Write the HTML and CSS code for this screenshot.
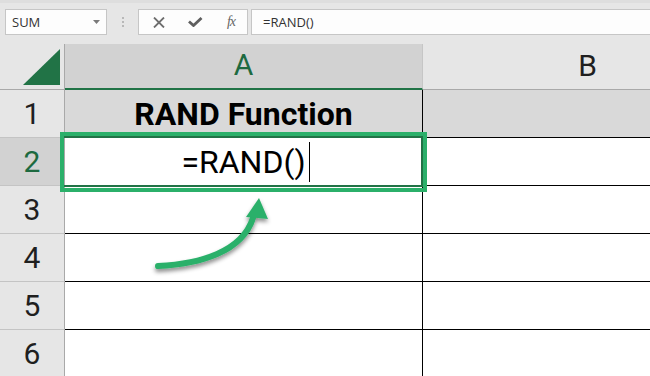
FILE: index.html
```html
<!DOCTYPE html>
<html lang="en">
<head>
  <meta charset="UTF-8">
  <meta name="viewport" content="width=device-width, initial-scale=1.0">
  <title>RAND Function</title>
  <link rel="stylesheet" href="styles.css">
</head>
<body>
  <div class="app">
    <div class="formula-bar">
      <div class="name-box">
        <span>SUM</span>
        <svg class="caret-down" width="7" height="4" viewBox="0 0 7 4"><path d="M0 0h7L3.5 4z" fill="#7a7a7a"/></svg>
      </div>
      <div class="grip"><i></i><i></i><i></i></div>
      <div class="fx-box">
        <svg width="12" height="11" viewBox="0 0 12 11"><path d="M1 0.5l10 10M11 0.5l-10 10" stroke="#6e6e6e" stroke-width="1.8" fill="none"/></svg>
        <svg width="15" height="10" viewBox="0 0 15 10"><path d="M1 4.5l4.5 4 8-7.5" stroke="#5f5f5f" stroke-width="2.8" fill="none"/></svg>
        <span class="fx">fx</span>
      </div>
      <div class="formula-input">=RAND()</div>
    </div>

    <div class="sheet">
      <div class="corner">
        <svg width="37" height="36" viewBox="0 0 37 36"><path d="M37 0v36H0z" fill="#217346"/></svg>
      </div>
      <div class="col-head active">A</div>
      <div class="col-head">B</div>

      <div class="row-head">1</div>
      <div class="cell col-a filled title">RAND Function</div>
      <div class="cell filled"></div>

      <div class="row-head active">2</div>
      <div class="cell col-a"><span class="edit">=RAND()<span class="caret"></span></span></div>
      <div class="cell"></div>

      <div class="row-head">3</div>
      <div class="cell col-a"></div>
      <div class="cell"></div>

      <div class="row-head">4</div>
      <div class="cell col-a"></div>
      <div class="cell"></div>

      <div class="row-head">5</div>
      <div class="cell col-a"></div>
      <div class="cell"></div>

      <div class="row-head">6</div>
      <div class="cell col-a"></div>
      <div class="cell"></div>

      <div class="active-cell"></div>
      <div class="highlight"></div>
    </div>

    <svg class="arrow" width="650" height="376" viewBox="0 0 650 376">
      <defs>
        <filter id="shadow" x="-20%" y="-20%" width="140%" height="160%">
          <feDropShadow dx="0" dy="3" stdDeviation="2" flood-color="#000" flood-opacity="0.45"/>
        </filter>
      </defs>
      <g filter="url(#shadow)">
        <path d="M158 266C200 264 242 252 253 218" stroke="#2bb06a" stroke-width="6" stroke-linecap="round" fill="none"/>
        <path d="M259 198L246 217L268 219z" fill="#2bb06a"/>
      </g>
    </svg>
  </div>
</body>
</html>
```

FILE: styles.css
```css
* {
  box-sizing: border-box;
}
body {
  margin: 0;
  background: #fff;
  font-family: Roboto, "Open Sans", sans-serif;
  overflow: hidden;
}
.app {
  position: relative;
  width: 650px;
  height: 376px;
  overflow: hidden;
}

/* formula bar */
.formula-bar {
  height: 44px;
  background: #e6e6e6;
  border-top: 3px solid #dedede;
  display: flex;
  align-items: flex-start;
  padding: 6px 0 0 5px;
  font-family: "Open Sans", sans-serif;
  font-size: 13px;
  color: #333;
}
.name-box,
.fx-box,
.formula-input {
  height: 26px;
  background: #fdfdfd;
  border: 1px solid #c6c6c6;
  display: flex;
  align-items: center;
}
.name-box {
  width: 102px;
  padding: 0 6px;
  justify-content: space-between;
}
.grip {
  width: 31px;
  height: 26px;
  display: flex;
  flex-direction: column;
  align-items: center;
  justify-content: center;
  gap: 2px;
}
.grip i {
  width: 2px;
  height: 2px;
  background: #b8b8b8;
}
.fx-box {
  width: 110px;
  padding: 0 12px 0 14px;
  justify-content: space-between;
}
.fx {
  font-family: "Liberation Serif", serif;
  font-style: italic;
  font-size: 14px;
  color: #666;
  letter-spacing: -1px;
}
.formula-input {
  flex: 1;
  margin-left: 3px;
  padding-left: 11px;
  border-right: none;
}

/* sheet grid */
.sheet {
  position: relative;
  display: grid;
  grid-template-columns: 65px 358px 330px;
  grid-template-rows: 46px repeat(6, 48px);
  font-size: 30px;
  color: #1f1f1f;
}
.corner {
  background: #e6e6e6;
  border-right: 1px solid #a9a9a9;
  border-bottom: 1px solid #a9a9a9;
  display: flex;
  align-items: flex-end;
  justify-content: flex-end;
  padding: 0 4px 4px 0;
}
.col-head {
  background: #e6e6e6;
  border-bottom: 1px solid #a9a9a9;
  border-right: 1px solid #c6c6c6;
  display: flex;
  align-items: center;
  justify-content: center;
  padding-bottom: 3px;
}
.col-head.active {
  background: #d2d2d2;
  color: #1d6a40;
  border-bottom: 2px solid #217346;
}
.row-head {
  background: #e6e6e6;
  border-right: 1px solid #a9a9a9;
  border-bottom: 1px solid #c4c4c4;
  display: flex;
  align-items: center;
  justify-content: center;
}
.row-head.active {
  background: #d2d2d2;
  color: #1d6a40;
}
.cell {
  border-bottom: 1px solid #000;
  display: flex;
  align-items: center;
  justify-content: center;
  font-size: 32px;
  color: #000;
}
.cell.col-a {
  border-right: 1px solid #000;
}
.cell.filled {
  background: #d9d9d9;
}
.title {
  font-weight: 700;
}
.edit {
  display: inline-flex;
  align-items: center;
  margin-left: 4px;
}
.caret {
  display: inline-block;
  width: 1px;
  height: 40px;
  margin-left: 3px;
  background: #000;
}

/* selection overlays */
.active-cell {
  position: absolute;
  left: 64px;
  top: 92px;
  width: 359px;
  height: 51px;
  border: 2px solid #217346;
  border-left: none;
}
.highlight {
  position: absolute;
  left: 60px;
  top: 88px;
  width: 367px;
  height: 60px;
  border: 4px solid #2bb06a;
}
.arrow {
  position: absolute;
  left: 0;
  top: 0;
  pointer-events: none;
}
```
